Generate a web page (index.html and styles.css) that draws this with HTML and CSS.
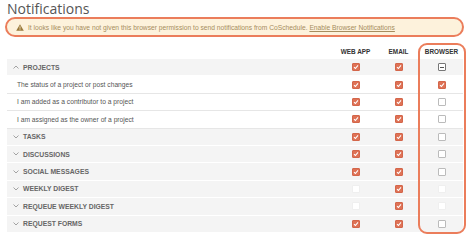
FILE: index.html
```html
<!DOCTYPE html>
<html>
<head>
    <title>Notifications</title>
    <link rel="stylesheet" href="styles.css">
</head>
<body>
    <div class="page">
        <h1>Notifications</h1>

        <div class="alert">
            <svg class="warn" width="8" height="7" viewBox="0 0 8 7"><path d="M4 0.3 L7.8 6.8 L0.2 6.8 Z" fill="#9a7a3c"/><rect x="3.6" y="2.3" width="0.8" height="2.4" fill="#fdf2dc"/><rect x="3.6" y="5.3" width="0.8" height="0.8" fill="#fdf2dc"/></svg>
            <span>It looks like you have not given this browser permission to send notifications from CoSchedule. <a href="#">Enable Browser Notifications</a></span>
        </div>

        <div class="table">
            <div class="browser-box"></div>

            <div class="row head">
                <div></div>
                <div class="col">WEB APP</div>
                <div class="col">EMAIL</div>
                <div class="col">BROWSER</div>
            </div>

            <div class="row group">
                <div class="label"><svg class="chev" width="6" height="4" viewBox="0 0 6 4"><path d="M0.5 3.5 L3 1 L5.5 3.5" fill="none" stroke="#999" stroke-width="0.9"/></svg>PROJECTS</div>
                <div class="col"><span class="box on"></span></div>
                <div class="col"><span class="box on"></span></div>
                <div class="col"><span class="box part"></span></div>
            </div>
            <div class="row item">
                <div class="label">The status of a project or post changes</div>
                <div class="col"><span class="box on"></span></div>
                <div class="col"><span class="box on"></span></div>
                <div class="col"><span class="box on"></span></div>
            </div>
            <div class="row item">
                <div class="label">I am added as a contributor to a project</div>
                <div class="col"><span class="box on"></span></div>
                <div class="col"><span class="box on"></span></div>
                <div class="col"><span class="box"></span></div>
            </div>
            <div class="row item">
                <div class="label">I am assigned as the owner of a project</div>
                <div class="col"><span class="box on"></span></div>
                <div class="col"><span class="box on"></span></div>
                <div class="col"><span class="box"></span></div>
            </div>

            <div class="row group">
                <div class="label"><svg class="chev" width="6" height="4" viewBox="0 0 6 4"><path d="M0.5 0.5 L3 3 L5.5 0.5" fill="none" stroke="#999" stroke-width="0.9"/></svg>TASKS</div>
                <div class="col"><span class="box on"></span></div>
                <div class="col"><span class="box on"></span></div>
                <div class="col"><span class="box"></span></div>
            </div>
            <div class="row group">
                <div class="label"><svg class="chev" width="6" height="4" viewBox="0 0 6 4"><path d="M0.5 0.5 L3 3 L5.5 0.5" fill="none" stroke="#999" stroke-width="0.9"/></svg>DISCUSSIONS</div>
                <div class="col"><span class="box on"></span></div>
                <div class="col"><span class="box on"></span></div>
                <div class="col"><span class="box"></span></div>
            </div>
            <div class="row group">
                <div class="label"><svg class="chev" width="6" height="4" viewBox="0 0 6 4"><path d="M0.5 0.5 L3 3 L5.5 0.5" fill="none" stroke="#999" stroke-width="0.9"/></svg>SOCIAL MESSAGES</div>
                <div class="col"><span class="box on"></span></div>
                <div class="col"><span class="box on"></span></div>
                <div class="col"><span class="box"></span></div>
            </div>
            <div class="row group">
                <div class="label"><svg class="chev" width="6" height="4" viewBox="0 0 6 4"><path d="M0.5 0.5 L3 3 L5.5 0.5" fill="none" stroke="#999" stroke-width="0.9"/></svg>WEEKLY DIGEST</div>
                <div class="col"><span class="box off"></span></div>
                <div class="col"><span class="box on"></span></div>
                <div class="col"><span class="box off"></span></div>
            </div>
            <div class="row group">
                <div class="label"><svg class="chev" width="6" height="4" viewBox="0 0 6 4"><path d="M0.5 0.5 L3 3 L5.5 0.5" fill="none" stroke="#999" stroke-width="0.9"/></svg>REQUEUE WEEKLY DIGEST</div>
                <div class="col"><span class="box off"></span></div>
                <div class="col"><span class="box on"></span></div>
                <div class="col"><span class="box off"></span></div>
            </div>
            <div class="row group">
                <div class="label"><svg class="chev" width="6" height="4" viewBox="0 0 6 4"><path d="M0.5 0.5 L3 3 L5.5 0.5" fill="none" stroke="#999" stroke-width="0.9"/></svg>REQUEST FORMS</div>
                <div class="col"><span class="box on"></span></div>
                <div class="col"><span class="box on"></span></div>
                <div class="col"><span class="box"></span></div>
            </div>
        </div>
    </div>
</body>
</html>
```

FILE: styles.css
```css
body {
    margin: 0;
    background-color: white;
    font-family: "Liberation Sans", Arial, sans-serif;
}

.page {
    width: 474px;
    height: 240px;
    overflow: hidden;
}

h1 {
    margin: 0;
    padding: 1px 7px 0;
    font-family: "Open Sans", sans-serif;
    font-weight: 400;
    font-size: 14px;
    line-height: 16px;
    color: #555;
}

.alert {
    display: flex;
    align-items: center;
    gap: 4px;
    margin: 0 10px 0 5px;
    height: 20px;
    box-sizing: border-box;
    padding: 0 9px;
    border: 2px solid #eb7d5b;
    border-radius: 10px;
    background-color: #fdf2dc;
    color: #a68d5e;
    font-size: 6.7px;
}

.alert a {
    color: #a68d5e;
}

.table {
    position: relative;
    margin: 7px 11px 0 7px;
}

.browser-box {
    position: absolute;
    top: -1px;
    right: -3px;
    width: 48px;
    height: 191px;
    box-sizing: border-box;
    border: 2px solid #eb7d5b;
    border-radius: 9px;
}

.row {
    display: grid;
    grid-template-columns: 1fr 43px 43px 43px;
    align-items: center;
    height: 17.4px;
    box-sizing: border-box;
}

.head {
    height: 15px;
    font-size: 6.4px;
    font-weight: bold;
    color: #333;
}

.col {
    display: flex;
    justify-content: center;
}

.group {
    background-color: #f4f4f4;
    border-bottom: 1px solid #fff;
}

.group .label {
    display: flex;
    align-items: center;
    gap: 4px;
    padding-left: 6px;
    font-size: 6.8px;
    font-weight: bold;
    color: #666;
}

.item {
    border-bottom: 1px solid #e6e6e6;
}

.item .label {
    padding-left: 10px;
    font-size: 6.7px;
    color: #555;
}

.box {
    display: block;
    width: 8px;
    height: 8px;
    box-sizing: border-box;
    border: 1px solid #bbb;
    border-radius: 1px;
    background-color: white;
}

.box.on {
    border-color: #d4664a;
    background-color: #de7256;
    background-image: url("data:image/svg+xml;utf8,<svg xmlns='http://www.w3.org/2000/svg' width='6' height='6' viewBox='0 0 6 6'><path d='M1 3.2 L2.4 4.5 L5 1.4' fill='none' stroke='white' stroke-width='1.1'/></svg>");
    background-repeat: no-repeat;
    background-position: center;
}

.box.part {
    border-color: #777;
    background-image: linear-gradient(#555, #555);
    background-size: 4px 1px;
    background-repeat: no-repeat;
    background-position: center;
}

.box.off {
    border-color: #efefef;
}
```
